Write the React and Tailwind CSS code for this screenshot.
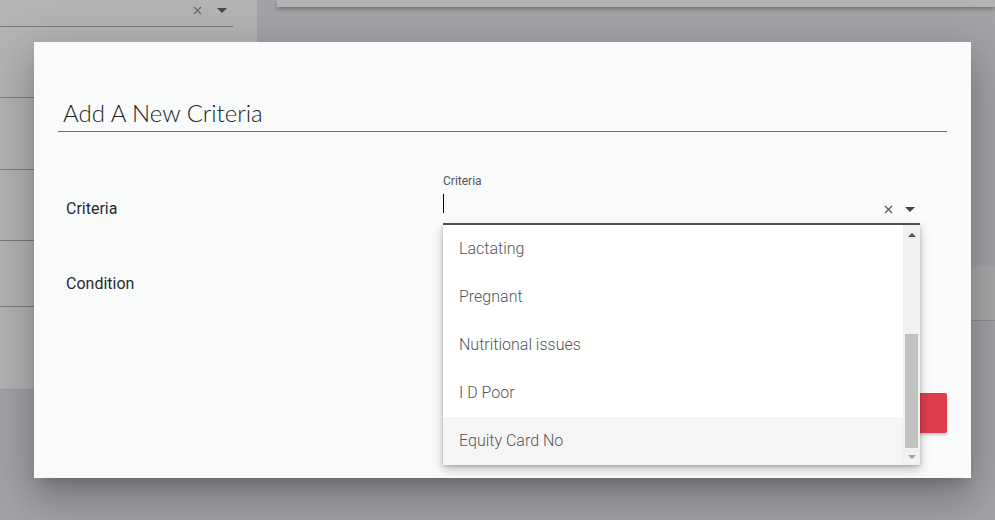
import { useState } from 'react'

const options = ['Lactating', 'Pregnant', 'Nutritional issues', 'I D Poor', 'Equity Card No']

function ClearIcon({ color = '#555' }) {
  return (
    <svg width="9" height="9" viewBox="0 0 9 9" className="block">
      <path d="M1 1l7 7M8 1l-7 7" stroke={color} strokeWidth="1.2" fill="none" />
    </svg>
  )
}

function CaretDown({ color = '#444' }) {
  return (
    <svg width="10" height="5" viewBox="0 0 10 5" className="block">
      <path d="M0 0h10L5 5z" fill={color} />
    </svg>
  )
}

function BackgroundPage() {
  const rows = [71, 72, 71, 66]
  return (
    <div className="flex">
      <div className="w-[257px] h-[390px] bg-[#b4b4b4] border-b border-[#9a9a9a]">
        <div className="w-[233px] h-[27px] border-b border-[#767676] flex items-center justify-end gap-[15px] pr-[6px] pb-[5px]">
          <ClearIcon color="#6a6a6a" />
          <CaretDown color="#4a4a4a" />
        </div>
        {rows.map((h, i) => (
          <div key={i} className="border-b border-[#7c7c7c]" style={{ height: h }} />
        ))}
      </div>
      <div className="flex-1 pl-[20px]">
        <div className="h-[7px] bg-[#b4b4b4] shadow-[0_2px_4px_rgba(0,0,0,0.3)]" />
        <div className="mt-[259px] ml-auto w-[30px] h-[55px] bg-[#aaaaaa] border-b border-[#8e8e8e]" />
      </div>
    </div>
  )
}

function Dropdown() {
  return (
    <div className="absolute left-[409px] top-[183px] w-[477px] h-[240px] bg-white flex shadow-[0_4px_10px_rgba(0,0,0,0.25),0_1px_3px_rgba(0,0,0,0.2)]">
      <div className="flex-1">
        {options.map((o, i) => (
          <div
            key={o}
            className={`h-[48px] px-4 flex items-center text-[16px] font-light text-[#555] ${i === options.length - 1 ? 'bg-[#f5f5f5]' : ''}`}
          >
            {o}
          </div>
        ))}
      </div>
      <div className="w-[17px] bg-[#f1f1f1] flex flex-col">
        <div className="h-[17px] flex items-center justify-center pt-[3px]">
          <svg width="8" height="4" viewBox="0 0 8 4"><path d="M0 4h8L4 0z" fill="#505050" /></svg>
        </div>
        <div className="h-[92px]" />
        <div className="h-[114px] mx-[2px] bg-[#c1c1c1]" />
        <div className="flex-1" />
        <div className="h-[17px] flex items-center justify-center">
          <svg width="8" height="4" viewBox="0 0 8 4"><path d="M0 0h8L4 4z" fill="#a3a3a3" /></svg>
        </div>
      </div>
    </div>
  )
}

export default function App() {
  const [open] = useState(true)

  return (
    <div className="relative w-[995px] h-[520px] overflow-hidden bg-[#a3a3a8]" style={{ fontFamily: "Roboto, 'Liberation Sans', sans-serif" }}>
      <BackgroundPage />

      <div className="absolute left-[34px] top-[42px] w-[937px] h-[436px] bg-[#f9fbfb] px-6 shadow-[0_11px_15px_-7px_rgba(0,0,0,0.2),0_24px_38px_3px_rgba(0,0,0,0.14),0_9px_46px_8px_rgba(0,0,0,0.12)]">
        <div className="pt-[55px] pb-[2px]">
          <h2 className="pl-[5px] text-[24px] leading-[32px] font-light text-[#222]" style={{ fontFamily: "Lato, 'Open Sans', sans-serif" }}>
            Add A New Criteria
          </h2>
        </div>
        <div className="h-px bg-[#e5394f]" />

        <div className="mt-[41px] flex items-start">
          <div className="w-[385px] pl-2 pt-[24px] text-[16px] leading-[24px] text-[#2a2a2a]">Criteria</div>
          <div className="flex-1 mr-[27px]">
            <div className="text-[12px] leading-[16px] text-[#555]">Criteria</div>
            <div className="h-[36px] border-b-2 border-[#555] flex items-start">
              <div className="mt-[5px] w-px h-[19px] bg-black" />
              <div className="ml-auto mt-[16px] pr-[5px] flex items-center gap-[12px]">
                <ClearIcon />
                <CaretDown />
              </div>
            </div>
          </div>
        </div>

        <div className="mt-[47px] pl-2 text-[16px] leading-[24px] text-[#2a2a2a]">Condition</div>

        <div className="mt-[97px] flex justify-end">
          <button className="h-[40px] w-[96px] rounded-[2px] bg-[#de3d4d] text-white text-[14px] font-medium shadow-[0_2px_3px_rgba(0,0,0,0.2)]">
            Save
          </button>
        </div>

        {open && <Dropdown />}
      </div>
    </div>
  )
}
